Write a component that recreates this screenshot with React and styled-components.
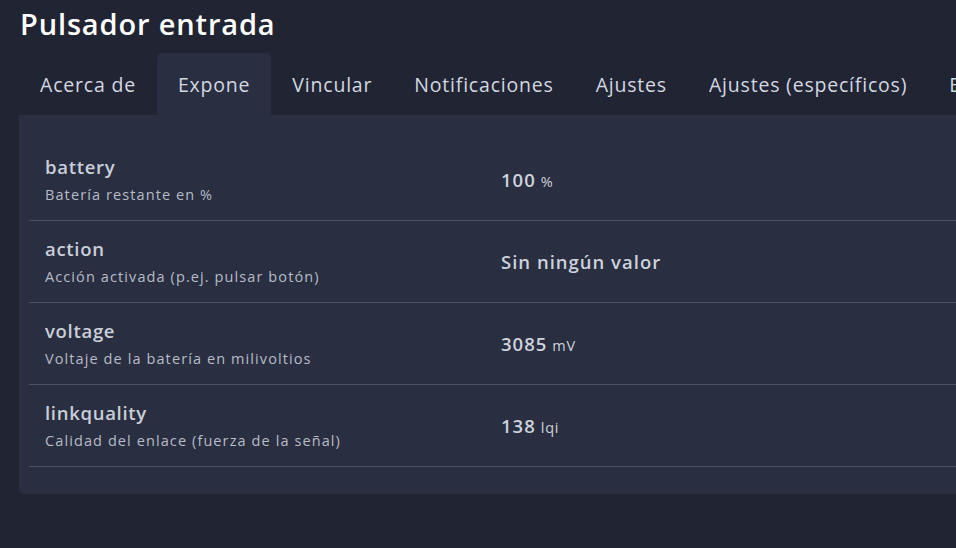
import React from "react";
import styled, { createGlobalStyle } from "styled-components";

const Global = createGlobalStyle`
  html, body { margin: 0; padding: 0; background: #212533; overflow: hidden; }
  body { font-family: "Open Sans", "Noto Sans", sans-serif; }
`;

const Page = styled.div`
  width: 1200px;
  min-height: 548px;
  background: #212533;
`;

const Title = styled.h1`
  margin: 0;
  padding-left: 20px;
  height: 53px;
  line-height: 48px;
  font-size: 29px;
  font-weight: 600;
  letter-spacing: 0.85px;
  color: #ffffff;
`;

const Tabs = styled.nav`
  display: flex;
  margin-left: 19px;
`;

const Tab = styled.div`
  height: 62px;
  padding: 0 21px;
  display: flex;
  align-items: center;
  font-size: 19.5px;
  letter-spacing: 0.8px;
  color: #d3d7e0;
  white-space: nowrap;
  border-radius: 5px 5px 0 0;
  background: ${(p) => (p.$active ? "#292e41" : "transparent")};
`;

const Panel = styled.section`
  margin-left: 19px;
  background: #292e41;
  padding: 24px 0 27px 10px;
  border-radius: 0 0 0 5px;
`;

const Row = styled.div`
  display: grid;
  grid-template-columns: 456px 1fr;
  align-items: center;
  height: 82px;
  box-sizing: border-box;
  border-bottom: 1px solid #4b5164;
`;

const NameCell = styled.div`
  padding-left: 16px;
  display: flex;
  flex-direction: column;
  gap: 8px;
`;

const Name = styled.div`
  font-size: 18.5px;
  font-weight: 600;
  letter-spacing: 0.7px;
  color: #c9ced8;
  line-height: 22px;
`;

const Desc = styled.div`
  font-size: 14.5px;
  letter-spacing: 1.1px;
  color: #b7bcc7;
  line-height: 18px;
`;

const Value = styled.div`
  padding-left: 16px;
  font-size: 18.5px;
  font-weight: 600;
  letter-spacing: 1px;
  color: #cdd2dc;
`;

const Unit = styled.span`
  font-size: 14.5px;
  font-weight: 400;
  letter-spacing: 0.8px;
  margin-left: 5px;
`;

const tabs = [
  "Acerca de",
  "Expone",
  "Vincular",
  "Notificaciones",
  "Ajustes",
  "Ajustes (específicos)",
  "Estado",
];

const rows = [
  { name: "battery", desc: "Batería restante en %", value: "100", unit: "%" },
  { name: "action", desc: "Acción activada (p.ej. pulsar botón)", value: "Sin ningún valor" },
  { name: "voltage", desc: "Voltaje de la batería en milivoltios", value: "3085", unit: "mV" },
  { name: "linkquality", desc: "Calidad del enlace (fuerza de la señal)", value: "138", unit: "lqi" },
];

export default function App() {
  return (
    <Page>
      <Global />
      <Title>Pulsador entrada</Title>
      <Tabs>
        {tabs.map((t) => (
          <Tab key={t} $active={t === "Expone"}>
            {t}
          </Tab>
        ))}
      </Tabs>
      <Panel>
        {rows.map((r) => (
          <Row key={r.name}>
            <NameCell>
              <Name>{r.name}</Name>
              <Desc>{r.desc}</Desc>
            </NameCell>
            <Value>
              {r.value}
              {r.unit && <Unit>{r.unit}</Unit>}
            </Value>
          </Row>
        ))}
      </Panel>
    </Page>
  );
}
